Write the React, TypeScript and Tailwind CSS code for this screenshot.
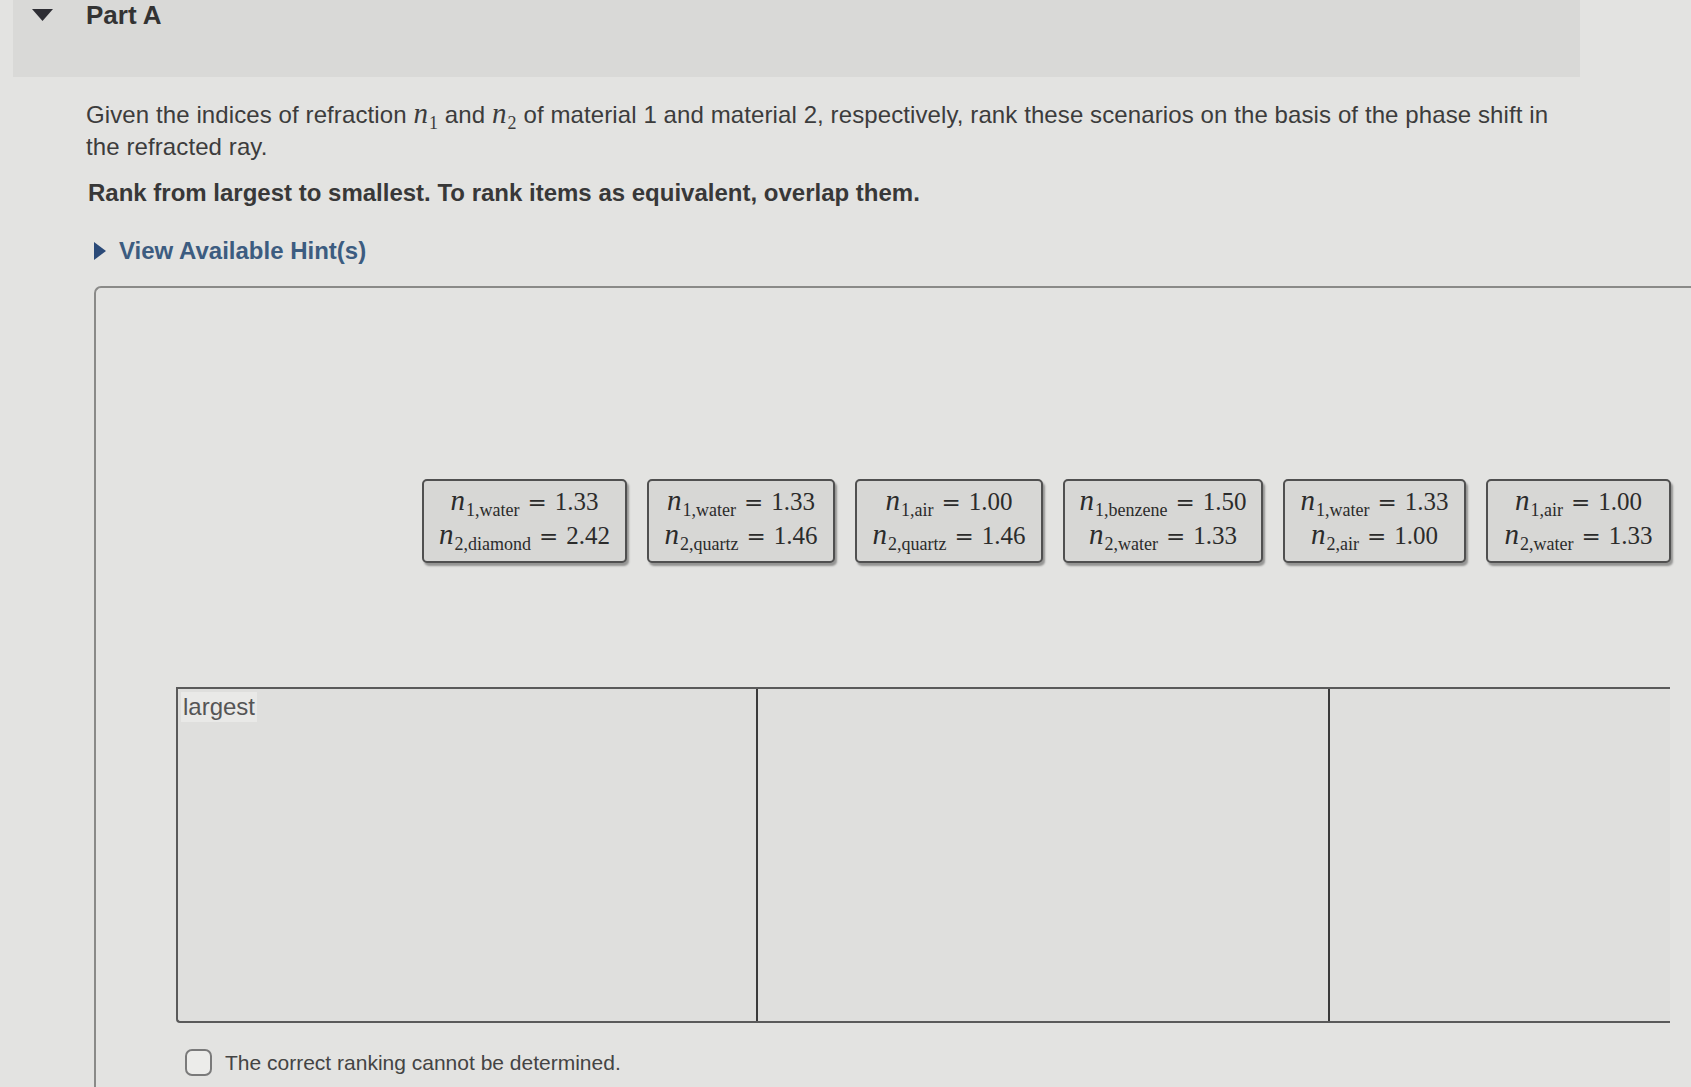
import React from "react";

type Item = { a: string; av: string; b: string; bv: string; w: string };

const items: Item[] = [
  { a: "1,water", av: "1.33", b: "2,diamond", bv: "2.42", w: "w-[205px]" },
  { a: "1,water", av: "1.33", b: "2,quartz", bv: "1.46", w: "w-[188px]" },
  { a: "1,air", av: "1.00", b: "2,quartz", bv: "1.46", w: "w-[188px]" },
  { a: "1,benzene", av: "1.50", b: "2,water", bv: "1.33", w: "w-[200px]" },
  { a: "1,water", av: "1.33", b: "2,air", bv: "1.00", w: "w-[183px]" },
  { a: "1,air", av: "1.00", b: "2,water", bv: "1.33", w: "w-[185px]" },
];

function Sym({ sub }: { sub: string }) {
  return (
    <span className="whitespace-nowrap font-['Liberation_Serif','DejaVu_Serif',serif]">
      <span className="italic text-[29px] mr-[1px]">n</span>
      <span className="relative top-[6px] text-[18px]">{sub}</span>
    </span>
  );
}

function Eq({ sub, val }: { sub: string; val: string }) {
  return (
    <div className="whitespace-nowrap leading-[30px] text-[25px] font-['Liberation_Serif','DejaVu_Serif',serif] text-[#2b2b2b]">
      <Sym sub={sub} />
      <span className="mx-[8px] font-['DejaVu_Serif',serif] font-light text-[23px]">=</span>
      <span>{val}</span>
    </div>
  );
}

function Card({ it }: { it: Item }) {
  return (
    <div
      className={`${it.w} h-[84px] shrink-0 rounded-[5px] border-2 border-[#505050] bg-[#d7d7d5] shadow-[2px_3px_2px_rgba(0,0,0,0.35)] flex flex-col items-center justify-center pb-[4px]`}
    >
      <Eq sub={it.a} val={it.av} />
      <Eq sub={it.b} val={it.bv} />
    </div>
  );
}

export default function App() {
  return (
    <div className="relative w-[1691px] h-[1087px] overflow-hidden bg-[#e3e3e1] font-['Liberation_Sans',Arial,sans-serif] text-[#3a3a3a]">
      {/* part header band */}
      <div className="ml-[13px] w-[1567px] h-[77px] bg-[#d9d9d7] flex items-start">
        <svg width="21" height="12" viewBox="0 0 21 12" className="ml-[19px] mt-[9px]">
          <path d="M0 0 H21 L10.5 12 Z" fill="#2e2e34" />
        </svg>
        <span className="ml-[33px] mt-[0px] text-[26px] leading-[30px] font-bold text-[#333]">Part A</span>
      </div>

      <div className="pl-[86px]">
        <p className="mt-[21px] text-[24px] leading-[30px] text-[#3c3c3c] tracking-[0.1px]">
          Given the indices of refraction <Sym sub="1" /> and <Sym sub="2" /> of material 1 and material 2, respectively, rank these scenarios on the basis of the phase shift in
          <br />
          the refracted ray.
        </p>
        <p className="mt-[16px] text-[24px] leading-[30px] font-bold text-[#383838] ml-[2px]">
          Rank from largest to smallest. To rank items as equivalent, overlap them.
        </p>
        <div className="mt-[28px] flex items-center ml-[8px]">
          <svg width="12" height="18" viewBox="0 0 12 18">
            <path d="M0 0 L12 9 L0 18 Z" fill="#2b4a78" />
          </svg>
          <span className="ml-[13px] text-[24px] leading-[30px] font-bold text-[#3c5c80]">View Available Hint(s)</span>
        </div>
      </div>

      {/* ranking widget */}
      <div className="ml-[94px] mt-[20px] w-[1700px] h-[900px] rounded-tl-[7px] border-l-2 border-t-2 border-[#8a8a88]">
        <div className="ml-[326px] mt-[191px] flex gap-[20px]">
          {items.map((it, i) => (
            <Card key={i} it={it} />
          ))}
        </div>

        <div className="ml-[80px] mt-[124px] w-[1494px] h-[336px] flex rounded-bl-[4px] border-y-2 border-l-2 border-[#5a5a5a] bg-[#dfdfdd]">
          <div className="w-[580px] h-full border-r-2 border-[#3a3a3a] relative">
            <span className="absolute left-[3px] top-[3px] bg-[#e9e9e7] px-[2px] text-[24px] leading-[30px] text-[#555]">largest</span>
          </div>
          <div className="w-[572px] h-full border-r-2 border-[#3a3a3a]" />
          <div className="flex-1 h-full" />
        </div>

        <div className="ml-[89px] mt-[26px] flex items-center">
          <div className="w-[27px] h-[27px] rounded-[7px] border-2 border-[#7a7a7a] bg-[#ececea]" />
          <span className="ml-[13px] text-[21px] leading-[26px] text-[#444]">The correct ranking cannot be determined.</span>
        </div>
      </div>
    </div>
  );
}
